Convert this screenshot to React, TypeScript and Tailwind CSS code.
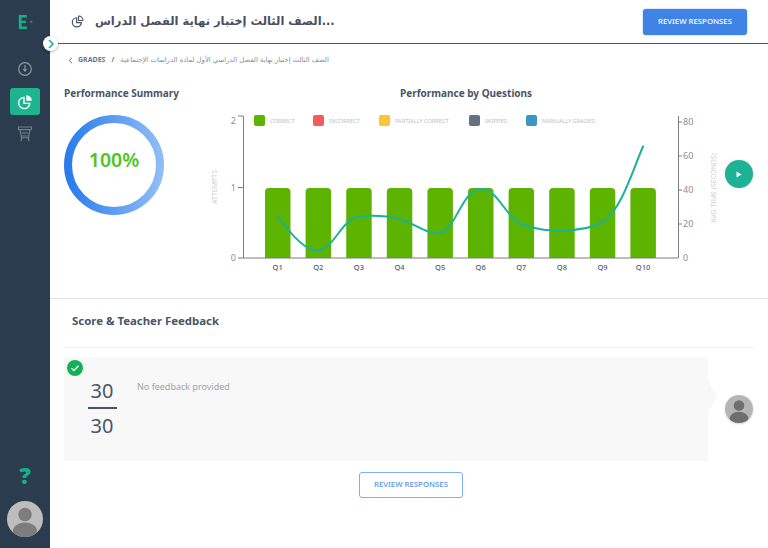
import React from "react";

const sans = { fontFamily: '"Noto Sans", "Open Sans", sans-serif' };

function Person({ size, bg, fg }: { size: number; bg: string; fg: string }) {
  return (
    <svg width={size} height={size} viewBox="0 0 36 36" className="block">
      <defs>
        <clipPath id={`c${size}`}>
          <circle cx="18" cy="18" r="18" />
        </clipPath>
      </defs>
      <circle cx="18" cy="18" r="18" fill={bg} />
      <g clipPath={`url(#c${size})`} fill={fg}>
        <circle cx="18" cy="13.5" r="6.8" />
        <ellipse cx="18" cy="30" rx="12" ry="8.5" />
      </g>
    </svg>
  );
}

function Sidebar() {
  return (
    <aside className="relative flex w-[50px] shrink-0 flex-col items-center bg-[#2b3c4e]">
      <div className="mt-[15px] flex h-[14px] items-center">
        <svg width="15" height="14" viewBox="0 0 15 14">
          <path d="M0.8 0h8v2.5H3.6v3.2h4.4v2.4H3.6v3.4h5.2V14h-8z" fill="#17ae8a" />
          <rect x="12.5" y="6" width="1.7" height="1.7" fill="#17ae8a" />
        </svg>
      </div>
      <button className="absolute left-[43px] top-[36px] z-10 flex h-[15px] w-[15px] items-center justify-center rounded-full bg-white shadow-[0_1px_3px_rgba(0,0,0,0.3)]">
        <svg width="8" height="10" viewBox="0 0 8 10">
          <path d="M2 1l4 4-4 4" fill="none" stroke="#1cb394" strokeWidth="1.6" />
        </svg>
      </button>
      <svg width="16" height="16" viewBox="0 0 16 16" className="mt-[32px]">
        <circle cx="8" cy="8" r="6.3" fill="none" stroke="#8b96a2" strokeWidth="1.2" />
        <path d="M8 4v6M6.4 8.2L8 10l1.6-1.8" fill="none" stroke="#8b96a2" strokeWidth="1.2" />
      </svg>
      <div className="mt-[11px] flex h-[27px] w-[30px] items-center justify-center rounded-[3px] bg-[#1eb391]">
        <svg width="16" height="16" viewBox="0 0 16 16">
          <path d="M7 3.4a5.6 5.6 0 1 0 5.8 6H7z" fill="none" stroke="#fff" strokeWidth="1.4" />
          <path d="M9.3 1.2a5.4 5.4 0 0 1 5.5 5.6H9.3z" fill="#fff" />
        </svg>
      </div>
      <svg width="16" height="16" viewBox="0 0 16 16" className="mt-[11px]">
        <path
          d="M1.5 1h13v2.6h-13zM3 3.6l1.2 6.4h7.6l1.2-6.4M4.2 10h7.6v1.8H4.2zM5 11.8l-1.2 3.4M11 11.8l1.2 3.4M4.5 7h7"
          fill="none"
          stroke="#717e8b"
          strokeWidth="1.1"
        />
      </svg>
      <div className="mt-auto flex flex-col items-center">
        <span className="text-[23px] font-black leading-[24px] text-[#17ae8a]" style={sans}>
          ?
        </span>
        <div className="mb-[11px] mt-[14px]">
          <Person size={36} bg="#bdbdbd" fg="#7d7d7d" />
        </div>
      </div>
    </aside>
  );
}

function Header() {
  return (
    <header className="flex h-[44px] shrink-0 items-center border-b border-[#4a5568] pl-[21px] pr-[21px]">
      <svg width="13" height="13" viewBox="0 0 16 16">
        <path d="M7 3.4a5.6 5.6 0 1 0 5.8 6H7z" fill="none" stroke="#4a5568" strokeWidth="1.5" />
        <path d="M9.3 1.2a5.4 5.4 0 0 1 5.5 5.6H9.3z" fill="none" stroke="#4a5568" strokeWidth="1.3" />
      </svg>
      <div
        dir="ltr"
        className="ml-[11px] w-[245px] whitespace-nowrap text-left text-[11.5px] font-semibold text-[#465063]"
        style={{ fontFamily: '"DejaVu Sans", "Noto Sans", sans-serif' }}
      >
        الصف الثالث إختبار نهاية الفصل الدراس...
      </div>
      <button
        className="ml-auto h-[26px] w-[104px] rounded-[3px] bg-[#3f83e6] text-[7.8px] font-medium text-white shadow-[0_0_2px_rgba(63,131,230,0.6)]"
        style={sans}
      >
        REVIEW RESPONSES
      </button>
    </header>
  );
}

function Breadcrumb() {
  return (
    <div className="mt-[9px] flex h-[14px] items-center pl-[18px] text-[7px] text-[#6d7684]" style={sans}>
      <svg width="5" height="7" viewBox="0 0 5 7">
        <path d="M4 .8L1.2 3.5 4 6.2" fill="none" stroke="#555f6e" strokeWidth="0.9" />
      </svg>
      <span className="ml-[5px] font-bold">GRADES</span>
      <span className="ml-[6px] font-bold">/</span>
      <span
        dir="rtl"
        className="ml-[6px] whitespace-nowrap text-[6.85px] text-[#868c96]"
        style={{ fontFamily: '"DejaVu Sans", "Noto Sans", sans-serif' }}
      >
        الصف الثالث إختبار نهاية الفصل الدراسي الأول لمادة الدراسات الإجتماعية
      </span>
    </div>
  );
}

function Ring() {
  return (
    <div className="relative mt-[15px] h-[100px] w-[100px]">
      <svg width="100" height="100" viewBox="0 0 100 100">
        <defs>
          <linearGradient id="ring" x1="0" y1="0" x2="1" y2="0">
            <stop offset="0" stopColor="#2a7deb" />
            <stop offset="1" stopColor="#8fbcf6" />
          </linearGradient>
        </defs>
        <circle cx="50" cy="50" r="46" fill="none" stroke="url(#ring)" strokeWidth="8" />
      </svg>
      <div
        className="absolute inset-x-0 top-[30px] text-center text-[19.5px] font-semibold leading-[30px] text-[#4ec51d]"
        style={sans}
      >
        100%
      </div>
    </div>
  );
}

const labels = ["Q1", "Q2", "Q3", "Q4", "Q5", "Q6", "Q7", "Q8", "Q9", "Q10"];
const legend: [string, string, number, number][] = [
  ["CORRECT", "#5cb300", 254, 270],
  ["INCORRECT", "#f45b5f", 313, 329],
  ["PARTIALLY CORRECT", "#fbc633", 379, 395],
  ["SKIPPED", "#657083", 469, 485],
  ["MANUALLY GRADED", "#3a97c4", 526, 542],
];

function Chart() {
  const ox = 205;
  const oy = 110;
  return (
    <svg width="520" height="170" viewBox={`${ox} ${oy} 520 170`} style={{ fontFamily: '"Noto Sans", sans-serif' }} className="block">
      {labels.map((q, i) => {
        const x = 265 + i * 40.6;
        return (
          <g key={q}>
            <path d={`M${x} 258v-66a4 4 0 0 1 4-4h17.5a4 4 0 0 1 4 4v66z`} fill="#5cb300" />
            <text x={x + 12.7} y="270" textAnchor="middle" fontSize="7.5" fontWeight="500" fill="#56606f">
              {q}
            </text>
          </g>
        );
      })}
      <path d="M243.5 116v142M238 116h5M238 187.5h5M238 258h440M678.5 116v142M678 122h4M678 156h4M678 190h4M678 224h4" fill="none" stroke="#7d7d7d" strokeWidth="1" />
      <g fontSize="9" fill="#8d8d8d">
        <text x="236" y="124" textAnchor="end">2</text>
        <text x="236" y="191" textAnchor="end">1</text>
        <text x="236" y="261" textAnchor="end">0</text>
        <text x="683" y="125">80</text>
        <text x="683" y="159">60</text>
        <text x="683" y="193">40</text>
        <text x="683" y="227">20</text>
        <text x="683" y="261">0</text>
      </g>
      <text transform="translate(217 187) rotate(-90)" textAnchor="middle" fontSize="7" fill="#cfcfcf">
        ATTEMPTS
      </text>
      <text transform="translate(715.5 188) rotate(-90)" textAnchor="middle" fontSize="7" fill="#cfcfcf">
        AVG TIME (SECONDS)
      </text>
      {legend.map(([t, c, x, tx]) => (
        <g key={t}>
          <rect x={x} y="115" width="11" height="11" rx="2" fill={c} />
          <text x={tx} y="122.5" fontSize="5.6" fill="#bdbdbd">
            {t}
          </text>
        </g>
      ))}
      <path
        d="M278 216C289 232 304 251 318 250.5C333 250 342 219 358.5 216.5C374 215 388 216 399 219C414 223 428 235 440 233C456 230 462 189 481 189C498 189 504 215 521 224C536 230 548 230.5 562 230.5C578 230.5 592 228 603 222C622 208 632 172 643 146.5"
        fill="none"
        stroke="#1cb394"
        strokeWidth="2"
        strokeLinecap="round"
      />
    </svg>
  );
}

export default function App() {
  return (
    <div className="flex h-[548px] w-[768px] overflow-hidden bg-white" style={sans}>
      <Sidebar />
      <main className="flex min-w-0 flex-1 flex-col">
        <Header />
        <Breadcrumb />
        <section className="relative flex h-[232px] shrink-0 border-b border-[#dfe2e6]">
          <div className="ml-[14px] w-[141px] shrink-0 pt-[19px]">
            <h2 className="whitespace-nowrap text-[10px] font-bold leading-[15px] text-[#4a5568]">Performance Summary</h2>
            <div className="-mt-[1px]">
              <Ring />
            </div>
          </div>
          <div className="min-w-0 flex-1">
            <h2 className="ml-[195px] pt-[19px] text-[10px] font-bold leading-[15px] text-[#4a5568]">
              Performance by Questions
            </h2>
            <div className="mt-[9px]">
              <Chart />
            </div>
          </div>
          <button className="absolute right-[15px] top-[93px] flex h-[28px] w-[28px] items-center justify-center rounded-full bg-[#1cb394] shadow-[0_0_2px_rgba(0,0,0,0.2)]">
            <svg width="6" height="7" viewBox="0 0 6 7">
              <path d="M0.5 0.5L5.5 3.5L0.5 6.5z" fill="#fff" />
            </svg>
          </button>
        </section>
        <section className="flex min-h-0 flex-1 flex-col">
          <h2 className="ml-[22px] mt-[14px] text-[11.4px] font-bold leading-[15px] text-[#4a5568]">
            Score &amp; Teacher Feedback
          </h2>
          <div className="ml-[14px] mr-[14px] mt-[19px] border-t border-[#efefef]" />
          <div className="mt-[9px] flex items-center pl-[14px]">
            <div className="relative flex h-[104px] w-[644px] shrink-0 bg-[#f8f8f8]">
              <div className="absolute left-[3px] top-[3px] flex h-[16px] w-[16px] items-center justify-center rounded-full bg-[#15b056]">
                <svg width="10" height="10" viewBox="0 0 10 10">
                  <path d="M1.5 5.3l2.4 2.3 4.6-4.8" fill="none" stroke="#fff" strokeWidth="1.3" />
                </svg>
              </div>
              <div className="ml-[23px] mt-[23px] flex w-[30px] flex-col items-center text-[20px] leading-[22px] text-[#4a5568]">
                <span>30</span>
                <span className="mb-[6px] mt-[5px] h-[2px] w-[29px] shrink-0 bg-[#4a5568]" />
                <span>30</span>
              </div>
              <p className="ml-[20px] mt-[23px] text-[9px] leading-[14px] text-[#a3a3a3]">No feedback provided</p>
              <div className="absolute left-full top-[24px] h-0 w-0 border-y-[16px] border-l-[9px] border-y-transparent border-l-[#f8f8f8]" />
            </div>
            <div className="ml-[17px] rounded-full shadow-[0_1px_2px_rgba(0,0,0,0.2)]">
              <Person size={28} bg="#b5b5b5" fg="#6e6e6e" />
            </div>
          </div>
          <button className="mx-auto mt-[11px] h-[26px] w-[104px] translate-x-[2px] rounded-[3px] border border-[#7fb0f5] bg-white text-[7.8px] font-medium text-[#5a93ea]">
            REVIEW RESPONSES
          </button>
        </section>
      </main>
    </div>
  );
}
